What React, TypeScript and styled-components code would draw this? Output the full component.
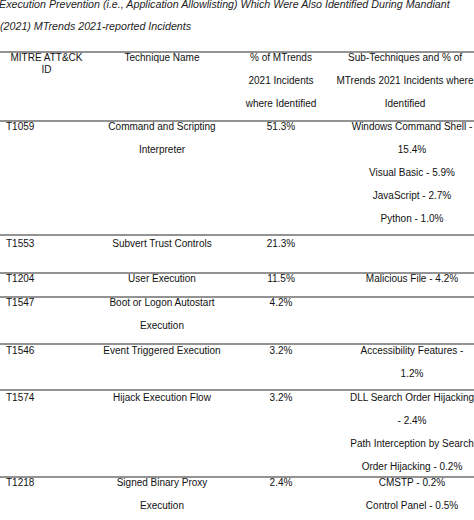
import { ReactElement } from "react";
import styled, { createGlobalStyle } from "styled-components";

type Technique = {
    id: string;
    name: string[];
    pct: string;
    subs: string[];
    height: number;
    offset: number;
};

const techniques: Technique[] = [
    {
        id: "T1059",
        name: ["Command and Scripting", "Interpreter"],
        pct: "51.3%",
        subs: ["Windows Command Shell -", "15.4%", "Visual Basic - 5.9%", "JavaScript - 2.7%", "Python - 1.0%"],
        height: 114,
        offset: 0,
    },
    { id: "T1553", name: ["Subvert Trust Controls"], pct: "21.3%", subs: [], height: 38, offset: 3 },
    { id: "T1204", name: ["User Execution"], pct: "11.5%", subs: ["Malicious File - 4.2%"], height: 24, offset: 0 },
    { id: "T1547", name: ["Boot or Logon Autostart", "Execution"], pct: "4.2%", subs: [], height: 47, offset: 0 },
    {
        id: "T1546",
        name: ["Event Triggered Execution"],
        pct: "3.2%",
        subs: ["Accessibility Features -", "1.2%"],
        height: 46,
        offset: 1,
    },
    {
        id: "T1574",
        name: ["Hijack Execution Flow"],
        pct: "3.2%",
        subs: ["DLL Search Order Hijacking", "- 2.4%", "Path Interception by Search", "Order Hijacking - 0.2%"],
        height: 87,
        offset: 2,
    },
    {
        id: "T1218",
        name: ["Signed Binary Proxy", "Execution"],
        pct: "2.4%",
        subs: ["CMSTP - 0.2%", "Control Panel - 0.5%"],
        height: 60,
        offset: 0,
    },
];

export default function App(): ReactElement {
    return (
        <Page>
            <GlobalStyle />

            <Caption>
                <CaptionLine $indent={-1}>
                    Execution Prevention (i.e., Application Allowlisting) Which Were Also Identified During Mandiant
                </CaptionLine>
                <CaptionLine $indent={0}>(2021) MTrends 2021-reported Incidents</CaptionLine>
            </Caption>

            <Table>
                <Row $height={69} $offset={0}>
                    <Cell $align="center">
                        <TightLine>MITRE ATT&amp;CK</TightLine>
                        <TightLine>ID</TightLine>
                    </Cell>
                    <Cell $align="center">
                        <Line>Technique Name</Line>
                    </Cell>
                    <Cell $align="center">
                        <Line>% of MTrends</Line>
                        <Line>2021 Incidents</Line>
                        <Line>where Identified</Line>
                    </Cell>
                    <Cell $align="center" $shift={14}>
                        <Line>Sub-Techniques and % of</Line>
                        <Line>MTrends 2021 Incidents where</Line>
                        <Line>Identified</Line>
                    </Cell>
                </Row>

                {techniques.map(({ id, name, pct, subs, height, offset }: Technique) => (
                    <Row key={id} $height={height} $offset={offset}>
                        <Cell $align="left">
                            <Line>{id}</Line>
                        </Cell>
                        <Cell $align="center">
                            {name.map((n) => <Line key={n}>{n}</Line>)}
                        </Cell>
                        <Cell $align="center">
                            <Line>{pct}</Line>
                        </Cell>
                        <Cell $align="center">
                            {subs.map((s) => <Line key={s}>{s}</Line>)}
                        </Cell>
                    </Row>
                ))}
            </Table>
        </Page>
    );
}

const GlobalStyle = createGlobalStyle`
    html, body {
        margin: 0;
        padding: 0;
        background: #ffffff;
        overflow: hidden;
    }
`;

const Page = styled.div`
    width: 474px;
    height: 520px;
    overflow: hidden;
    background: #ffffff;
    color: #111111;
    font-family: "Liberation Sans", Arial, sans-serif;
`;

const Caption = styled.div`
    margin-top: -7px;
    font-size: 10.7px;
    font-style: italic;
    line-height: 22px;
    color: #1e1e1e;
`;

const CaptionLine = styled.div<{ $indent: number }>`
    white-space: nowrap;
    margin-left: ${(p) => p.$indent}px;
`;

const Table = styled.div`
    margin-top: 14px;
    width: 493px;
    display: flex;
    flex-direction: column;
`;

const Row = styled.div<{ $height: number; $offset: number }>`
    display: grid;
    grid-template-columns: 93px 138px 100px 162px;
    box-sizing: border-box;
    height: ${(p) => p.$height}px;
    padding-top: ${(p) => p.$offset}px;
    border-top: 2px solid #939393;
`;

const Cell = styled.div<{ $align: "left" | "center"; $shift?: number }>`
    font-size: 10px;
    text-align: ${(p) => p.$align};
    padding-left: ${(p) => (p.$align === "left" ? "6px" : "0")};
    padding-right: ${(p) => p.$shift ?? 0}px;
    white-space: nowrap;
`;

const Line = styled.div`
    height: 23px;
    line-height: 10px;
`;

const TightLine = styled.div`
    height: 12px;
    line-height: 10px;
`;
